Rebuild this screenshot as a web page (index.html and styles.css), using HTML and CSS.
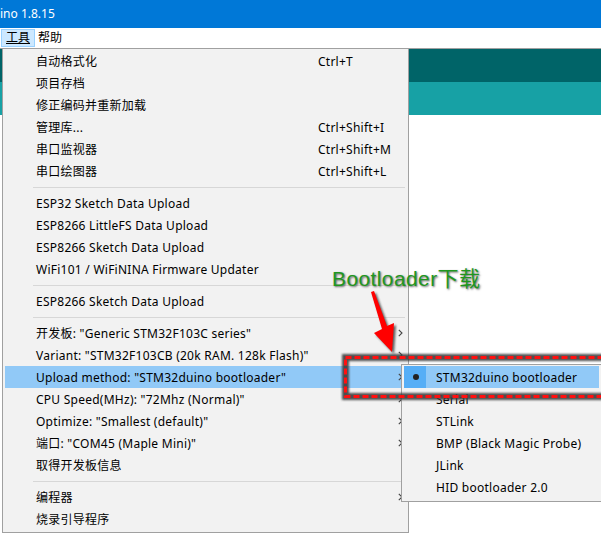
FILE: index.html
```html
<!DOCTYPE html>
<html>
<head>
<meta charset="utf-8">
<link rel="stylesheet" href="styles.css">
</head>
<body>
<div class="screen">
  <div class="titlebar">ino 1.8.15</div>
  <div class="menubar">
    <span class="mb-item active"><u>工具</u></span>
    <span class="mb-item second">帮助</span>
  </div>
  <div class="app">
    <div class="tb1"></div>
    <div class="tb2"></div>
    <div class="editor"></div>
  </div>

  <div class="menu">
    <div class="item"><span>自动格式化</span><span>Ctrl+T</span><span></span></div>
    <div class="item"><span>项目存档</span><span></span><span></span></div>
    <div class="item"><span>修正编码并重新加载</span><span></span><span></span></div>
    <div class="item"><span>管理库...</span><span>Ctrl+Shift+I</span><span></span></div>
    <div class="item"><span>串口监视器</span><span>Ctrl+Shift+M</span><span></span></div>
    <div class="item"><span>串口绘图器</span><span>Ctrl+Shift+L</span><span></span></div>
    <div class="sep"></div>
    <div class="item"><span>ESP32 Sketch Data Upload</span><span></span><span></span></div>
    <div class="item"><span>ESP8266 LittleFS Data Upload</span><span></span><span></span></div>
    <div class="item"><span>ESP8266 Sketch Data Upload</span><span></span><span></span></div>
    <div class="item"><span>WiFi101 / WiFiNINA Firmware Updater</span><span></span><span></span></div>
    <div class="sep"></div>
    <div class="item"><span>ESP8266 Sketch Data Upload</span><span></span><span></span></div>
    <div class="sep"></div>
    <div class="item"><span>开发板: "Generic STM32F103C series"</span><span></span><svg class="chev" viewBox="0 0 5 8"><polyline points="0.8,0.8 4,4 0.8,7.2"/></svg></div>
    <div class="item"><span>Variant: "STM32F103CB (20k RAM. 128k Flash)"</span><span></span><svg class="chev" viewBox="0 0 5 8"><polyline points="0.8,0.8 4,4 0.8,7.2"/></svg></div>
    <div class="item hl"><span>Upload method: "STM32duino bootloader"</span><span></span><svg class="chev" viewBox="0 0 5 8"><polyline points="0.8,0.8 4,4 0.8,7.2"/></svg></div>
    <div class="item"><span>CPU Speed(MHz): "72Mhz (Normal)"</span><span></span><svg class="chev" viewBox="0 0 5 8"><polyline points="0.8,0.8 4,4 0.8,7.2"/></svg></div>
    <div class="item"><span>Optimize: "Smallest (default)"</span><span></span><svg class="chev" viewBox="0 0 5 8"><polyline points="0.8,0.8 4,4 0.8,7.2"/></svg></div>
    <div class="item"><span>端口: "COM45 (Maple Mini)"</span><span></span><svg class="chev" viewBox="0 0 5 8"><polyline points="0.8,0.8 4,4 0.8,7.2"/></svg></div>
    <div class="item"><span>取得开发板信息</span><span></span><span></span></div>
    <div class="sep"></div>
    <div class="item"><span>编程器</span><span></span><svg class="chev" viewBox="0 0 5 8"><polyline points="0.8,0.8 4,4 0.8,7.2"/></svg></div>
    <div class="item"><span>烧录引导程序</span><span></span><span></span></div>
  </div>

  <div class="submenu">
    <div class="sitem hl"><span class="mark"><span class="dot"></span></span><span>STM32duino bootloader</span></div>
    <div class="sitem"><span class="mark"></span><span>Serial</span></div>
    <div class="sitem"><span class="mark"></span><span>STLink</span></div>
    <div class="sitem"><span class="mark"></span><span>BMP (Black Magic Probe)</span></div>
    <div class="sitem"><span class="mark"></span><span>JLink</span></div>
    <div class="sitem"><span class="mark"></span><span>HID bootloader 2.0</span></div>
  </div>

  <svg class="annot" width="601" height="538" viewBox="0 0 601 538">
    <defs>
      <filter id="sh" x="-20%" y="-20%" width="140%" height="140%">
        <feGaussianBlur stdDeviation="1.2"/>
      </filter>
    </defs>
    <rect x="345.5" y="357.5" width="262" height="39" fill="none" stroke="#3c3c3c" stroke-width="7" filter="url(#sh)" opacity="0.9"/>
    <rect x="345.5" y="357.5" width="262" height="39" fill="none" stroke="#ff1010" stroke-width="3" stroke-dasharray="6 3"/>
    <polygon points="372,293 375,292 388,327 395,324 393,353 375,334 383,330" fill="#3a3a3a" filter="url(#sh)" opacity="0.8" transform="translate(1,1)"/>
    <polygon points="371,292 374,291 387,326 394,323 392,352 374,333 382,329" fill="#ff0000"/>
  </svg>

  <div class="label">Bootloader下载</div>
</div>
</body>
</html>
```

FILE: styles.css
```css
* { box-sizing: border-box; }
html, body { margin: 0; padding: 0; }
body {
  width: 601px;
  height: 538px;
  overflow: hidden;
  background: #ffffff;
  font-family: "Noto Sans", "Noto Sans CJK SC", sans-serif;
  font-size: 12px;
  color: #000;
}
.screen {
  position: relative;
  width: 601px;
  height: 538px;
  overflow: hidden;
}
.titlebar {
  height: 28px;
  background: #0078d7;
  color: #fff;
  font-size: 12px;
  line-height: 28px;
}
.menubar {
  height: 20px;
  background: #fff;
  display: flex;
  align-items: center;
  padding-left: 1px;
}
.mb-item {
  height: 18px;
  line-height: 16px;
  padding: 0 4px;
  border: 1px solid transparent;
}
.mb-item.active {
  background: #cce8ff;
  border-color: #99d1ff;
}
.mb-item.second { padding-left: 2px; }
.app {
  border-top: 1px solid #a0a0a0;
}
.tb1 { height: 33px; background: #006468; }
.tb2 { height: 33px; background: #17a1a5; }
.editor { height: 420px; background: #fff; }

.menu {
  position: absolute;
  left: 2px;
  top: 48px;
  width: 407px;
  height: 485px;
  background: #f2f2f2;
  border: 1px solid #a0a0a0;
  padding: 1px 2px 2px 2px;
  display: flex;
  flex-direction: column;
  letter-spacing: 0.25px;
}
.item {
  height: 22px;
  display: grid;
  grid-template-columns: 282px 1fr 8px;
  align-items: center;
  padding-left: 31px;
  white-space: nowrap;
}
.item.hl { background: #91c9f7; }
.chev {
  width: 5px;
  height: 8px;
  fill: none;
  stroke: #444;
  stroke-width: 1.1;
}
.sep {
  height: 10px;
  display: flex;
  align-items: center;
  padding-left: 28px;
  padding-right: 1px;
}
.sep::before {
  content: "";
  display: block;
  height: 1px;
  width: 100%;
  background: #d7d7d7;
}

.submenu {
  position: absolute;
  left: 401px;
  top: 364px;
  width: 200px;
  height: 138px;
  background: #f2f2f2;
  border: 1px solid #a0a0a0;
  border-right: none;
  padding: 1px 2px 2px 2px;
  display: flex;
  flex-direction: column;
  letter-spacing: 0.25px;
}
.sitem {
  height: 22px;
  display: flex;
  align-items: center;
  white-space: nowrap;
}
.sitem.hl { background: #91c9f7; }
.mark {
  width: 22px;
  height: 22px;
  margin-right: 10px;
  display: flex;
  align-items: center;
  justify-content: center;
}
.sitem.hl .mark { background: #56aef6; }
.dot {
  width: 6px;
  height: 6px;
  border-radius: 50%;
  background: #222;
  margin-left: 2px;
}

.annot {
  position: absolute;
  left: 0;
  top: 0;
}
.label {
  position: absolute;
  left: 332px;
  top: 265px;
  font-family: "Liberation Sans", "Noto Sans CJK SC", sans-serif;
  font-size: 21px;
  letter-spacing: 0.4px;
  line-height: 28px;
  color: #1f961f;
  text-shadow: 1px 1px 2px rgba(40, 40, 40, 0.7);
}
```
